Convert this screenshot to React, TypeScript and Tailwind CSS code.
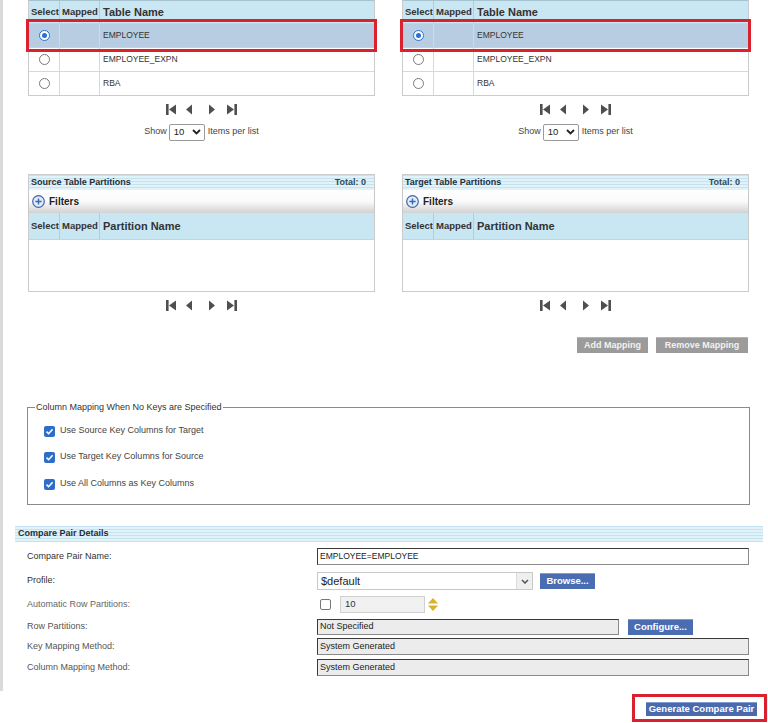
import React from "react";

const font = "font-['Liberation_Sans',Arial,sans-serif]";

function Pager() {
  const c = "#4f4f4f";
  return (
    <div className="flex h-[12px] items-center justify-center">
      <svg width="10" height="11" viewBox="0 0 10 11">
        <rect x="0" y="0" width="2.6" height="11" fill={c} />
        <polygon points="10,0.5 10,10.5 3,5.5" fill={c} />
      </svg>
      <svg className="ml-[10px]" width="6" height="11" viewBox="0 0 6 11">
        <polygon points="6,0.5 6,10.5 0,5.5" fill={c} />
      </svg>
      <svg className="ml-[17px]" width="6" height="11" viewBox="0 0 6 11">
        <polygon points="0,0.5 0,10.5 6,5.5" fill={c} />
      </svg>
      <svg className="ml-[12px]" width="10" height="11" viewBox="0 0 10 11">
        <polygon points="0,0.5 0,10.5 7,5.5" fill={c} />
        <rect x="7.4" y="0" width="2.6" height="11" fill={c} />
      </svg>
    </div>
  );
}

function Radio({ on }: { on?: boolean }) {
  return on ? (
    <div className="flex h-[11px] w-[11px] items-center justify-center rounded-full border-[1.5px] border-[#2a6fd1] bg-white">
      <div className="h-[5px] w-[5px] rounded-full bg-[#2a6fd1]" />
    </div>
  ) : (
    <div className="h-[11px] w-[11px] rounded-full border border-[#7a7a7a] bg-white" />
  );
}

function Check() {
  return (
    <div className="flex h-[11px] w-[11px] items-center justify-center rounded-[2px] bg-[#2d6cc8]">
      <svg width="9" height="9" viewBox="0 0 9 9">
        <path d="M1.5 4.6 L3.6 6.7 L7.6 2.3" stroke="white" strokeWidth="1.6" fill="none" />
      </svg>
    </div>
  );
}

function TableList() {
  const rows = ["EMPLOYEE", "EMPLOYEE_EXPN", "RBA"];
  return (
    <div className="relative">
      <div className="border border-[#cbcbcb] border-t-[#a7c3cf] bg-white">
        <div className="flex h-[23px] border-b border-[#b9d8e5] bg-[#c9e7f3] font-bold text-[#333]">
          <div className="flex w-[31px] items-center border-r border-[#a9cfe0] pl-[2px] text-[9.5px]">Select</div>
          <div className="flex w-[40px] items-center border-r border-[#a9cfe0] pl-[2px] text-[9.5px]">Mapped</div>
          <div className="flex flex-1 items-center pl-[3px] text-[11px]">Table Name</div>
        </div>
        {rows.map((r, i) => (
          <div
            key={r}
            className={
              "flex text-[8.5px] text-[#333] " +
              (i === 0 ? "h-[24px] border-b border-[#d0d0d0] bg-[#b8cde1]" : i === 1 ? "h-[24px] border-b border-[#d8d8d8]" : "h-[23px]")
            }
          >
            <div className="flex w-[31px] items-center justify-center border-r border-[#d8d8d8]">
              <Radio on={i === 0} />
            </div>
            <div className="w-[40px] border-r border-[#d8d8d8]" />
            <div className="flex flex-1 items-center pl-[3px]">{r}</div>
          </div>
        ))}
      </div>
      <div className="pointer-events-none absolute left-[-2px] right-[-2px] top-[19px] h-[33px] border-[3px] border-[#d9222d]" />
    </div>
  );
}

function ShowLine() {
  return (
    <div className="mt-[8px] flex h-[18px] items-center justify-center text-[9px] text-[#444]">
      <span>Show</span>
      <div className="ml-[2px] flex h-[17px] w-[36px] items-center justify-between rounded-[2px] border border-[#9a9a9a] bg-white pl-[4px] pr-[3px] text-[9.5px] text-[#222]">
        <span>10</span>
        <svg width="9" height="6" viewBox="0 0 9 6">
          <path d="M1 1 L4.5 4.5 L8 1" stroke="#222" strokeWidth="1.8" fill="none" />
        </svg>
      </div>
      <span className="ml-[3px]">Items per list</span>
    </div>
  );
}

function PlusIcon() {
  return (
    <svg width="13" height="13" viewBox="0 0 13 13">
      <circle cx="6.5" cy="6.5" r="5.8" fill="#e3ecf9" stroke="#3a66ad" strokeWidth="1.2" />
      <path d="M6.5 3.4v6.2M3.4 6.5h6.2" stroke="#3a66ad" strokeWidth="1.4" />
    </svg>
  );
}

const stripes =
  "bg-[image:repeating-linear-gradient(180deg,#c4e3f0_0px,#c4e3f0_1px,#e2f2f9_1px,#e2f2f9_3px)]";

function PartitionPanel({ title }: { title: string }) {
  return (
    <div className="border border-[#cbcbcb] bg-white">
      <div className={"flex h-[15px] items-center justify-between pl-[2px] pr-[8px] text-[9px] font-bold text-[#1f2e3c] " + stripes}>
        <span>{title}</span>
        <span className="text-[#2c4a5a]">Total: 0</span>
      </div>
      <div className="flex h-[23px] items-center bg-linear-to-b from-white via-[#fafafa] to-[#d2d2d2] pl-[3px] shadow-[0_1px_1px_rgba(0,0,0,0.12)]">
        <PlusIcon />
        <span className="ml-[4px] text-[10px] font-bold text-[#222]">Filters</span>
      </div>
      <div className="flex h-[27px] border-b border-[#b9d8e5] bg-[#c9e7f3] font-bold text-[#333]">
        <div className="flex w-[31px] items-center border-r border-[#a9cfe0] pl-[2px] text-[9.5px]">Select</div>
        <div className="flex w-[40px] items-center border-r border-[#a9cfe0] pl-[2px] text-[9.5px]">Mapped</div>
        <div className="flex flex-1 items-center pl-[3px] text-[11px]">Partition Name</div>
      </div>
      <div className="h-[51px]" />
    </div>
  );
}

function GrayButton({ children, w }: { children: React.ReactNode; w: string }) {
  return (
    <div className={"flex h-[16px] items-center justify-center border-t border-[#b4b4b4] bg-[#9b9b9b] text-[9px] font-bold text-[#f2f2f2] " + w}>
      {children}
    </div>
  );
}

function BlueButton({ children, w }: { children: React.ReactNode; w: string }) {
  return (
    <div className={"flex h-[16px] items-center justify-center border-t border-[#7f9bd0] bg-[#4a6cb0] text-[9.5px] font-bold text-white " + w}>
      {children}
    </div>
  );
}

const darkInput = "border-[1.5px] border-[#3a3a3a] border-b-[#8a8a8a] border-r-[#8a8a8a]";

export default function App() {
  return (
    <div className={"h-[723px] w-[768px] overflow-hidden bg-white " + font}>
      <div className="border-l-[3px] border-[#dadada] pb-[15px]">
        {/* top tables */}
        <div className="pl-[25px]">
          <div className="grid w-[721px] grid-cols-[347px_347px] gap-x-[27px]">
            <div>
              <TableList />
              <div className="mt-[7px]">
                <Pager />
              </div>
              <ShowLine />
            </div>
            <div>
              <TableList />
              <div className="mt-[7px]">
                <Pager />
              </div>
              <ShowLine />
            </div>
          </div>

          <div className="mt-[33px] grid w-[721px] grid-cols-[347px_347px] gap-x-[27px]">
            <div>
              <PartitionPanel title="Source Table Partitions" />
              <div className="mt-[7px]">
                <Pager />
              </div>
            </div>
            <div>
              <PartitionPanel title="Target Table Partitions" />
              <div className="mt-[7px]">
                <Pager />
              </div>
            </div>
          </div>

          <div className="mt-[26px] flex w-[720px] justify-end gap-[8px]">
            <GrayButton w="w-[71px]">Add Mapping</GrayButton>
            <GrayButton w="w-[92px]">Remove Mapping</GrayButton>
          </div>
        </div>

        {/* fieldset */}
        <fieldset className="ml-[24px] mt-[48px] w-[723px] border border-[#8a8a8a]">
          <legend className="ml-[7px] px-[1px] text-[9px] leading-[12px] text-[#333]">
            Column Mapping When No Keys are Specified
          </legend>
          <div className="pb-[13px] pl-[16px] text-[9px] text-[#444]">
            <div className="mt-[11px] flex h-[14px] items-center">
              <Check />
              <span className="ml-[5px]">Use Source Key Columns for Target</span>
            </div>
            <div className="mt-[12px] flex h-[14px] items-center">
              <Check />
              <span className="ml-[5px]">Use Target Key Columns for Source</span>
            </div>
            <div className="mt-[13px] flex h-[14px] items-center">
              <Check />
              <span className="ml-[5px]">Use All Columns as Key Columns</span>
            </div>
          </div>
        </fieldset>

        {/* compare pair details */}
        <div className={"ml-[12px] mt-[21px] flex h-[16px] w-[748px] items-center pl-[3px] text-[9px] font-bold text-[#1f2e3c] " + stripes}>
          Compare Pair Details
        </div>

        <div className="pl-[24px] text-[9px]">
          <div className="mt-[6px] flex h-[17px] items-center">
            <div className="w-[290px] text-[#333]">Compare Pair Name:</div>
            <div className={"flex h-[17px] w-[432px] items-center bg-white pl-[2px] text-[8.5px] text-[#222] " + darkInput}>
              EMPLOYEE=EMPLOYEE
            </div>
          </div>

          <div className="mt-[7px] flex h-[18px] items-center">
            <div className="w-[290px] text-[#333]">Profile:</div>
            <div className="flex h-[18px] w-[216px] items-center border border-[#c8c8c8] bg-white">
              <span className="flex-1 pl-[3px] text-[11px] text-[#222]">$default</span>
              <div className="flex h-full w-[16px] items-center justify-center border-l border-[#dcdcdc] bg-[#efefef]">
                <svg width="8" height="5" viewBox="0 0 8 5">
                  <path d="M1 1 L4 4 L7 1" stroke="#555" strokeWidth="1.5" fill="none" />
                </svg>
              </div>
            </div>
            <div className="ml-[7px]">
              <BlueButton w="w-[55px]">Browse...</BlueButton>
            </div>
          </div>

          <div className="mt-[6px] flex h-[17px] items-center">
            <div className="w-[290px] text-[#666]">Automatic Row Partitions:</div>
            <div className="ml-[3px] h-[11px] w-[11px] rounded-[2px] border border-[#777] bg-white" />
            <div className="ml-[9px] flex h-[17px] w-[85px] items-center border border-[#d0d0d0] bg-[#f1f1f1] pl-[4px] text-[9.5px] text-[#333]">
              10
            </div>
            <svg className="ml-[3px]" width="10" height="15" viewBox="0 0 10 15">
              <polygon points="5,1 10,6.5 0,6.5" fill="#d9b22a" />
              <polygon points="0,8.5 10,8.5 5,14" fill="#d9b22a" />
            </svg>
          </div>

          <div className="mt-[5px] flex h-[17px] items-center">
            <div className="w-[290px] text-[#555]">Row Partitions:</div>
            <div className={"flex h-[16px] w-[302px] items-center bg-[#ececec] pl-[2px] text-[#222] " + darkInput}>
              Not Specified
            </div>
            <div className="ml-[9px]">
              <BlueButton w="w-[65px]">Configure...</BlueButton>
            </div>
          </div>

          <div className="mt-[3px] flex h-[17px] items-center">
            <div className="w-[290px] text-[#555]">Key Mapping Method:</div>
            <div className={"flex h-[17px] w-[432px] items-center bg-[#ececec] pl-[2px] text-[#222] " + darkInput}>
              System Generated
            </div>
          </div>

          <div className="mt-[4px] flex h-[17px] items-center">
            <div className="w-[290px] text-[#555]">Column Mapping Method:</div>
            <div className={"flex h-[17px] w-[432px] items-center bg-[#ececec] pl-[2px] text-[#222] " + darkInput}>
              System Generated
            </div>
          </div>
        </div>
      </div>

      {/* footer */}
      <div className="mt-[3px] flex justify-end pr-[1px]">
        <div className="border-[3px] border-[#d9222d] pb-[3px] pl-[11px] pr-[7px] pt-[5px]">
          <div className="flex h-[14px] items-center justify-center border-t border-[#7f9bd0] bg-[#4a6aab] w-[111px] text-[9.5px] font-bold text-white">
            Generate Compare Pair
          </div>
        </div>
      </div>
    </div>
  );
}
